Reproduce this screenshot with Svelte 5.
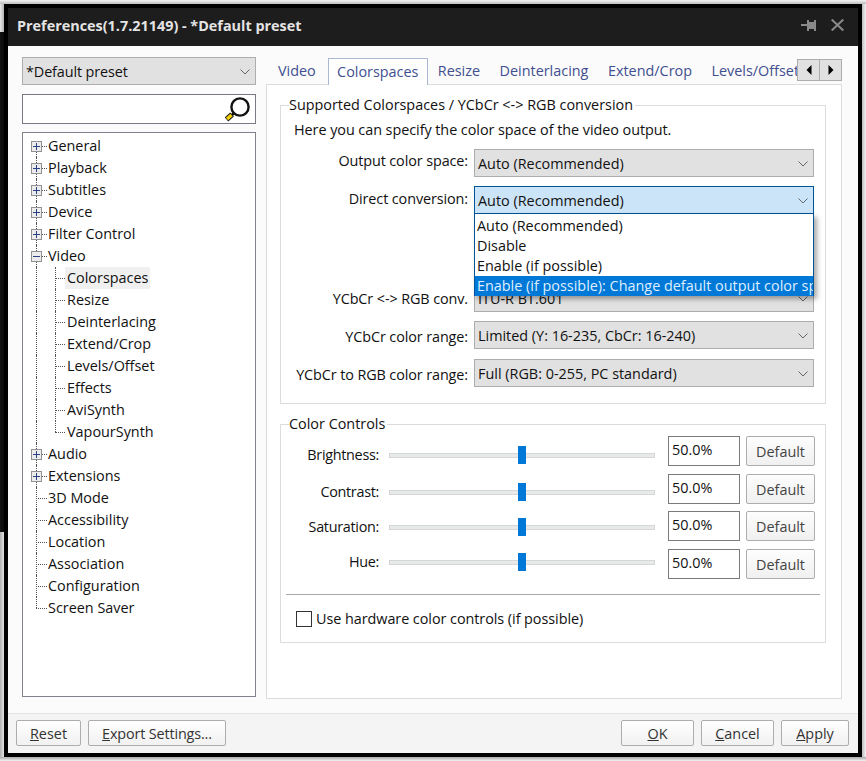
<script>
  const tree = [
    { label: 'General', box: '+', first: true }, { label: 'Playback', box: '+' }, { label: 'Subtitles', box: '+' },
    { label: 'Device', box: '+' }, { label: 'Filter Control', box: '+' }, { label: 'Video', box: '-' },
    { label: 'Colorspaces', child: true, selected: true }, { label: 'Resize', child: true },
    { label: 'Deinterlacing', child: true }, { label: 'Extend/Crop', child: true },
    { label: 'Levels/Offset', child: true }, { label: 'Effects', child: true },
    { label: 'AviSynth', child: true }, { label: 'VapourSynth', child: true, lastChild: true },
    { label: 'Audio', box: '+' }, { label: 'Extensions', box: '+' }, { label: '3D Mode' },
    { label: 'Accessibility' }, { label: 'Location' }, { label: 'Association' },
    { label: 'Configuration' }, { label: 'Screen Saver', last: true }
  ];
  const tabs = ['Video', 'Colorspaces', 'Resize', 'Deinterlacing', 'Extend/Crop', 'Levels/Offset'];
  const sliders = [
    { label: 'Brightness:', gap: 3, shift: 8 },
    { label: 'Contrast:', gap: 8, shift: 6 },
    { label: 'Saturation:', gap: 7, shift: 2 },
    { label: 'Hue:', gap: 8, shift: -4 }
  ];
</script>

{#snippet chevron()}
  <svg class="chev" width="10" height="6" viewBox="0 0 10 6"><path d="M.5.5l4.5 4.5 4.5-4.5" fill="none" stroke="#666"/></svg>
{/snippet}

<div class="frame">
  <div class="window">
    <header class="titlebar">
      <span class="title">Preferences(1.7.21149) - *Default preset</span>
      <svg class="tool" width="15" height="13" viewBox="0 0 15 13"><path d="M0 5h6v2H0zM6 1h2v2h5V1h2v11h-2v-2H8v2H6z" fill="#8a8a8a"/></svg>
      <svg class="tool" width="13" height="12" viewBox="0 0 13 12"><path d="M.7.5l11.6 11M12.3.5L.7 11.5" stroke="#8a8a8a" stroke-width="2" fill="none"/></svg>
    </header>

    <div class="body">
      <aside class="left">
        <div class="combo preset"><span>*Default preset</span>{@render chevron()}</div>
        <div class="search">
          <svg width="26" height="26" viewBox="0 0 26 26"><circle cx="15" cy="11" r="8.6" fill="#fff" stroke="#111" stroke-width="2.4"/><path d="M9 17l-2 2" stroke="#111" stroke-width="2.6"/><path d="M7 18.5l-5.5 5" stroke="#111" stroke-width="5.4"/><path d="M6.5 19l-4.5 4" stroke="#f2cf00" stroke-width="3.4"/></svg>
        </div>
        <div class="tree">
          {#each tree as item}
            <div class="node" class:child={item.child} class:first={item.first} class:last={item.last} class:lastchild={item.lastChild}>
              {#if item.box}
                <span class="box"><i class="h"></i>{#if item.box === '+'}<i class="v"></i>{/if}</span>
                <span class="dash"></span>
              {:else}
                <span class="dots"></span>
              {/if}
              <span class="lbl" class:sel={item.selected}>{item.label}</span>
            </div>
          {/each}
        </div>
      </aside>

      <section class="right">
        <div class="tabs">
          {#each tabs as t, i}
            <span class="tab" class:active={i === 1}>{t}</span>
          {/each}
          <div class="spin">
            <span><svg width="6" height="10" viewBox="0 0 6 10"><path d="M5.5 0v10L.5 5z" fill="#000"/></svg></span>
            <span><svg width="6" height="10" viewBox="0 0 6 10"><path d="M.5 0v10l5-5z" fill="#000"/></svg></span>
          </div>
        </div>
        <div class="pane">
          <fieldset class="group g1">
            <legend>Supported Colorspaces / YCbCr &lt;-&gt; RGB conversion</legend>
            <p class="hint">Here you can specify the color space of the video output.</p>
            <div class="row r1"><span class="rl l1">Output color space:</span><div class="combo"><span>Auto (Recommended)</span>{@render chevron()}</div></div>
            <div class="row r2"><span class="rl l2">Direct conversion:</span>
              <div class="wrap">
                <div class="combo focus"><span>Auto (Recommended)</span>{@render chevron()}</div>
                <ul class="drop">
                  <li>Auto (Recommended)</li>
                  <li>Disable</li>
                  <li>Enable (if possible)</li>
                  <li class="hot">Enable (if possible): Change default output color space</li>
                </ul>
              </div>
            </div>
            <div class="row r3"><span class="rl l3">YCbCr &lt;-&gt; RGB conv.</span><div class="combo"><span>ITU-R BT.601</span>{@render chevron()}</div></div>
            <div class="row r4"><span class="rl l4">YCbCr color range:</span><div class="combo"><span>Limited (Y: 16-235, CbCr: 16-240)</span>{@render chevron()}</div></div>
            <div class="row r5"><span class="rl l4">YCbCr to RGB color range:</span><div class="combo"><span>Full (RGB: 0-255, PC standard)</span>{@render chevron()}</div></div>
          </fieldset>

          <fieldset class="group g2">
            <legend>Color Controls</legend>
            {#each sliders as s}
              <div class="srow" style:margin-top="{s.gap}px">
                <span class="sl" style:margin-top="{s.shift}px">{s.label}</span>
                <div class="slider" style:margin-top="{s.shift}px"><i class="track"></i><i class="thumb"></i></div>
                <div class="edit">50.0%</div>
                <button class="btn def">Default</button>
              </div>
            {/each}
            <hr />
            <div class="check"><i></i><span>Use hardware color controls (if possible)</span></div>
          </fieldset>
        </div>
      </section>
    </div>

    <footer class="footer">
      <button class="btn reset"><u>R</u>eset</button>
      <button class="btn export"><u>E</u>xport Settings...</button>
      <span class="grow"></span>
      <button class="btn ok"><u>O</u>K</button>
      <button class="btn cancel"><u>C</u>ancel</button>
      <button class="btn apply"><u>A</u>pply</button>
    </footer>
  </div>
</div>

<style>
  :global(body) { margin: 0; background: #fff; }
  .frame {
    width: 866px; height: 761px; box-sizing: border-box; padding: 8px; overflow: hidden;
    font: 14.4px/20px "Open Sans", "Noto Sans", sans-serif; color: #111;
    background:
      linear-gradient(#f4f4f4, #bcbcbc) top / 100% 4px no-repeat,
      linear-gradient(#a8a8a8, #f2f2f2) bottom / 100% 4px no-repeat,
      linear-gradient(90deg, #bdbdbd, #f2f2f2) right / 4px 100% no-repeat,
      linear-gradient(90deg, #e8e8e8, #b4b4b4) 0 0 / 4px 32px no-repeat,
      linear-gradient(90deg, #b0b0b0, #e4e4e4) 0 532px / 4px 229px no-repeat,
      linear-gradient(90deg, #141414, #0a0a0a) 0 32px / 4px 500px no-repeat,
      #000;
  }
  .window { width: 850px; height: 745px; display: flex; flex-direction: column; background: #fff; }
  .titlebar { height: 38px; flex: none; background: #1d1d1d; display: flex; align-items: center; padding: 0 14px 2px 9px; gap: 15px; box-sizing: border-box; }
  .title { flex: 1; color: #e4e4e4; font-weight: 700; font-size: 14.4px; }
  .tool { margin-bottom: 2px; flex: none; }
  .body { flex: 1; display: flex; background: #fbfbfb; padding: 11px 0 0 14px; min-height: 0; }
  .left { width: 234px; flex: none; display: flex; flex-direction: column; }
  .combo { height: 28px; box-sizing: border-box; border: 1px solid #adadad; background: #e1e1e1; display: flex; align-items: center; justify-content: space-between; padding: 2px 5px 0 3px; white-space: nowrap; }
  .preset { letter-spacing: -.12px; }
  .search { height: 30px; margin-top: 9px; box-sizing: border-box; border: 1px solid #7a7a86; background: #fff; display: flex; justify-content: flex-end; align-items: center; padding-right: 4px; }
  .tree { height: 565px; margin-top: 8px; box-sizing: border-box; border: 1px solid #82828c; background: #fff; padding: 2px 0 0 8px; }
  .node { height: 22px; display: flex; align-items: center; position: relative; }
  .node::before { content: ""; position: absolute; left: 5px; top: 0; bottom: 0; border-left: 1px dotted #555; }
  .node.first::before { top: 50%; }
  .node.last::before { bottom: 50%; }
  .node.child::after { content: ""; position: absolute; left: 24px; top: 0; bottom: 0; border-left: 1px dotted #555; }
  .node.lastchild::after { bottom: 50%; }
  .box { width: 11px; height: 11px; box-sizing: border-box; border: 1px solid #919191; background: #ececec; position: relative; flex: none; z-index: 1; }
  .box .h { position: absolute; left: 1px; right: 1px; top: 4px; height: 1px; background: #2a3f86; }
  .box .v { position: absolute; top: 1px; bottom: 1px; left: 4px; width: 1px; background: #2a3f86; }
  .dash { width: 5px; border-top: 1px dotted #555; flex: none; }
  .dots { width: 11px; margin-left: 5px; border-top: 1px dotted #555; flex: none; }
  .node.child .dots { width: 10px; margin-left: 24px; }
  .lbl { padding: 0 1px; line-height: 22px; }
  .node.child .lbl { padding: 0 2px; }
  .sel { background: #f0f0f0; }
  .right { margin-left: 10px; width: 576px; flex: none; display: flex; flex-direction: column; }
  .tabs { height: 28px; display: flex; align-items: flex-end; color: #3f4f8f; position: relative; flex: none; overflow: hidden; padding-left: 12px; }
  .tab { padding: 0 9.75px; height: 25px; line-height: 22px; flex: none; }
  .tab:first-child { padding: 0 12px 0 0; }
  .tab.active { width: 100px; padding: 0; margin-right: .25px; text-align: center; height: 27px; box-sizing: border-box; border: 1px solid #a9b7d3; border-bottom: 0; background: #fff; line-height: 26px; z-index: 1; }
  .spin { position: absolute; right: 0; top: 2px; display: flex; height: 22px; background: #e1e1e1; }
  .spin span { width: 23px; height: 22px; box-sizing: border-box; border: 1px solid #adadad; display: flex; align-items: center; justify-content: center; }
  .spin span + span { margin-left: -1px; }
  .pane { height: 615px; box-sizing: border-box; border: 1px solid #dcdcdc; background: #fff; margin-top: -1px; padding: 11px 0 0 13px; }
  .group { margin: 0; padding: 0; border: 1px solid #dcdcdc; width: 546px; box-sizing: border-box; min-width: 0; }
  legend { margin-left: 8px; padding: 0 2px 0 0; line-height: 18px; }
  .g1 { height: 308px; }
  .hint { margin: 6px 0 0 13px; letter-spacing: -.05px; }
  .row { display: flex; align-items: center; }
  .rl { width: 187px; text-align: right; margin-right: 6px; flex: none; white-space: nowrap; letter-spacing: -.1px; }
  .l1 { margin-top: -4px; } .l2 { margin-top: -2px; } .l3 { margin-top: 2px; } .l4 { margin-top: 4px; }
  .row .combo, .row .wrap { width: 340px; flex: none; }
  .wrap { position: relative; }
  .r1 { margin-top: 9px; } .r2 { margin-top: 9px; } .r3 { margin-top: 70px; } .r4 { margin-top: 9px; } .r5 { margin-top: 10px; }
  .focus { background: #cce4f7; border-color: #005499; }
  .drop { position: absolute; left: 0; top: 28px; width: 340px; box-sizing: border-box; margin: 0; padding: 2px 0 0; list-style: none; background: #fff; border: 1px solid #005499; border-top: 0; border-bottom: 0; box-shadow: 3px 3px 5px rgba(0,0,0,.35); overflow: hidden; z-index: 3; }
  .drop li { height: 20px; line-height: 20px; padding-left: 2px; white-space: nowrap; }
  .drop .hot { background: #0078d7; color: #dfefff; }
  .g2 { height: 228px; margin-top: 11px; }
  .srow { height: 30px; display: flex; align-items: center; }
  .sl { width: 98px; text-align: right; flex: none; letter-spacing: -.3px; }
  .slider { width: 266px; margin-left: 10px; position: relative; height: 18px; flex: none; }
  .track { position: absolute; left: 0; right: 0; top: 7px; height: 3px; background: #e7eaea; border: 1px solid #d6d6d6; }
  .thumb { position: absolute; left: 129px; top: 0; width: 8px; height: 18px; background: #0078d7; }
  .edit { width: 72px; height: 30px; box-sizing: border-box; border: 1px solid #7a7a7a; margin-left: 13px; padding: 3px 3px 0; background: #fff; flex: none; }
  .btn { font: inherit; color: #333; border: 1px solid #adadad; border-radius: 2px; background: linear-gradient(#fdfdfd, #f0f0f0); padding: 2px 0 0; height: 30px; box-sizing: border-box; flex: none; }
  .def { width: 69px; margin-left: 6px; color: #444; }
  hr { border: 0; border-top: 1px solid #a8a8a8; margin: 15px 5px 0 5px; }
  .check { display: flex; align-items: center; margin: 14px 0 0 15px; gap: 4px; letter-spacing: -.05px; }
  .check i { width: 16px; height: 16px; box-sizing: border-box; border: 1px solid #333; background: #fff; }
  .footer { height: 40px; flex: none; background: #f4f4f4; border-top: 1px solid #e4e4e4; display: flex; align-items: flex-start; padding: 6px 9px 0 8px; box-sizing: border-box; gap: 7px; }
  .footer .btn { height: 26px; background: linear-gradient(#fff, #f1f1f1); }
  .export { letter-spacing: -.15px; }
  .grow { flex: 1; }
  .reset { width: 65px; } .export { width: 138px; } .ok { width: 73px; } .cancel { width: 73px; } .apply { width: 68px; }
</style>
